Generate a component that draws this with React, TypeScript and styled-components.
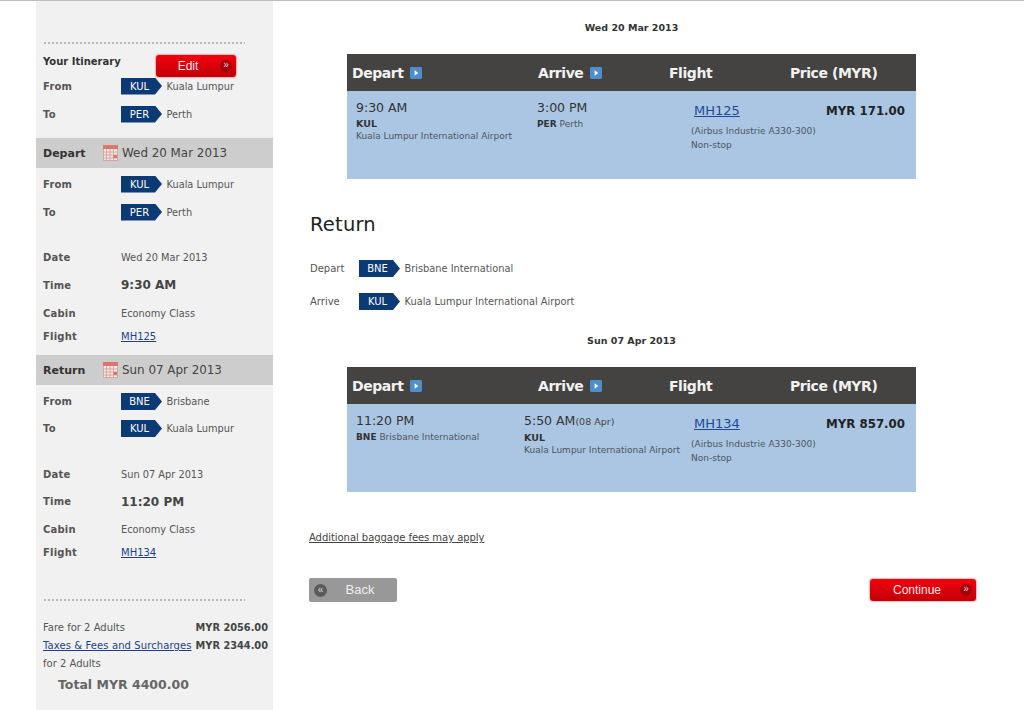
import React from "react";
import styled, { createGlobalStyle } from "styled-components";

const Global = createGlobalStyle`
  html, body { margin: 0; padding: 0; background: #fff; }
  body { font-family: "DejaVu Sans", Verdana, sans-serif; color: #333; overflow: hidden; }
  * { box-sizing: border-box; }
`;

const Page = styled.div`
  display: flex;
  width: 1024px;
  height: 710px;
  padding-left: 36px;
  border-top: 1px solid #bdbdbd;
  overflow: hidden;
`;

const Sidebar = styled.aside`
  width: 237px;
  flex: none;
  height: 709px;
  background: #f1f1f1;
  padding-top: 41px;
`;

const Dots = styled.div<{ $top?: number }>`
  margin: ${(p) => p.$top ?? 0}px 0 0 7px;
  width: 202px;
  height: 2px;
  background-image: radial-gradient(circle, #b4b4b4 0.7px, transparent 0.8px);
  background-size: 4px 2px;
`;

const TitleRow = styled.div`
  display: flex;
  height: 28px;
  padding: 5px 0 0 7px;
  align-items: flex-start;
`;

const SideTitle = styled.div`
  font-size: 10px;
  font-weight: bold;
  color: #333;
  width: 113px;
  line-height: 25px;
`;

const RedButton = styled.div<{ $w: number; $h: number }>`
  position: relative;
  flex: none;
  width: ${(p) => p.$w}px;
  height: ${(p) => p.$h}px;
  border-radius: 3px;
  background: linear-gradient(#f2000d, #c20008);
  box-shadow: 0 0 1px 1px rgba(220, 60, 60, 0.35);
  color: #f8e8e8;
  font-family: "Liberation Sans", Arial, sans-serif;
  font-size: 12px;
  line-height: ${(p) => p.$h}px;
  text-align: center;
  padding-right: 12px;
`;

const EditButton = styled(RedButton)`
  margin-top: 6px;
  padding-right: 16px;
`;

const Bullet = styled.span`
  position: absolute;
  right: 4px;
  top: 50%;
  width: 12px;
  height: 12px;
  margin-top: -6px;
  border-radius: 50%;
  background: #a30009;
  color: #f6d0d0;
  font-size: 10px;
  line-height: 10px;
  text-align: center;
  padding: 0;
`;

const Row = styled.div<{ $h?: number; $top?: number }>`
  display: flex;
  align-items: center;
  height: ${(p) => p.$h ?? 28}px;
  margin-top: ${(p) => p.$top ?? 0}px;
  padding-left: 7px;
  font-size: 10px;
  color: #555;
`;

const Label = styled.div`
  width: 78px;
  flex: none;
  font-weight: bold;
  font-size: 10px;
  color: #555;
  letter-spacing: 0.2px;
`;

const Value = styled.div<{ $big?: boolean }>`
  font-size: ${(p) => (p.$big ? 12 : 9.8)}px;
  font-weight: ${(p) => (p.$big ? "bold" : "normal")};
  color: ${(p) => (p.$big ? "#444" : "#555")};
`;

const Tag = styled.span`
  flex: none;
  width: 41px;
  height: 17px;
  background: #0b3a75;
  color: #fff;
  font-size: 10px;
  line-height: 17px;
  text-align: center;
  padding-right: 4px;
  clip-path: polygon(0 0, 34px 0, 100% 50%, 34px 100%, 0 100%);
  margin-right: 4.5px;
`;

const Place = styled.span`
  font-size: 9.8px;
  color: #555;
`;

const Band = styled.div<{ $top: number }>`
  display: flex;
  align-items: center;
  height: 30px;
  margin-top: ${(p) => p.$top}px;
  padding-left: 7px;
  background: #cdcdcd;
`;

const BandTitle = styled.div`
  width: 60px;
  flex: none;
  font-size: 11px;
  font-weight: bold;
  color: #333;
`;

const BandDate = styled.div`
  margin-left: 4px;
  font-size: 11.9px;
  color: #444;
`;

const SideLink = styled.a`
  color: #1e3f8a;
  text-decoration: underline;
  font-size: 10px;
`;

const FareLink = styled(SideLink)`
  letter-spacing: 0.1px;
`;

const FareRow = styled.div<{ $top?: number }>`
  display: flex;
  justify-content: space-between;
  height: 18px;
  margin-top: ${(p) => p.$top ?? 0}px;
  padding: 0 5px 0 7px;
  font-size: 10px;
  line-height: 18px;
  color: #555;
  white-space: nowrap;
`;

const FareAmount = styled.b`
  color: #444;
  font-size: 9.8px;
`;

const Total = styled.div`
  margin: 2px 0 0 22px;
  font-size: 12.5px;
  font-weight: bold;
  color: #666;
  line-height: 20px;
`;

const Main = styled.main`
  width: 667px;
  flex: none;
  margin-left: 36px;
`;

const DateTitle = styled.div<{ $top: number }>`
  width: 569px;
  margin: ${(p) => p.$top}px 0 0 38px;
  height: 14px;
  font-size: 9.5px;
  line-height: 14px;
  font-weight: bold;
  color: #333;
  text-align: center;
`;

const Table = styled.div`
  width: 569px;
  margin: 19px 0 0 38px;
`;

const THead = styled.div`
  display: grid;
  grid-template-columns: 186px 131px 121px 1fr;
  height: 37px;
  padding-left: 5px;
  background: #444342;
  align-items: center;
`;

const Th = styled.div`
  display: flex;
  align-items: center;
  gap: 7px;
  color: #f2f2f2;
  font-size: 14px;
  font-weight: bold;
  letter-spacing: -0.45px;
`;

const TBody = styled.div<{ $arrive: number }>`
  display: grid;
  grid-template-columns: ${(p) => p.$arrive}px ${(p) => 335 - p.$arrive}px 135px 1fr;
  height: 88px;
  padding: 9px 0 0 9px;
  background: #abc6e2;
  align-items: start;
`;

const Cell = styled.div`
  font-size: 9px;
  line-height: 12px;
  color: #4d5560;
  white-space: nowrap;
`;

const Time = styled.div`
  font-size: 12.5px;
  font-weight: normal;
  line-height: 15px;
  color: #333;
  margin: 0 0 3px;
`;

const Small = styled.span`
  font-size: 9.5px;
  color: #444;
`;

const Code = styled.div`
  font-weight: bold;
  font-size: 9.5px;
  color: #333;
`;

const CodeInline = styled.b`
  color: #333;
`;

const FlightLink = styled.a`
  display: block;
  margin: 3px 0 6px 3px;
  font-size: 13px;
  line-height: 15px;
  color: #1c4a98;
  text-decoration: underline;
`;

const Sub = styled.div`
  font-size: 9px;
  line-height: 14px;
  color: #4d5560;
`;

const Price = styled.div`
  font-size: 11.8px;
  font-weight: bold;
  line-height: 18px;
  margin-top: 2px;
  color: #222;
`;

const Heading = styled.h2`
  margin: 34px 0 0 1px;
  font-size: 19.5px;
  line-height: 24px;
  font-weight: normal;
  letter-spacing: 0.2px;
  color: #222;
`;

const InfoRow = styled.div<{ $top: number }>`
  display: flex;
  align-items: center;
  height: 17px;
  margin-top: ${(p) => p.$top}px;
  font-size: 10px;
  color: #555;
`;

const InfoLabel = styled.div`
  width: 50px;
  flex: none;
  padding-left: 1px;
`;

const Baggage = styled.a`
  display: block;
  margin-top: 39px;
  font-size: 10px;
  line-height: 14px;
  letter-spacing: -0.05px;
  color: #444;
  text-decoration: underline;
`;

const Actions = styled.div`
  display: flex;
  justify-content: space-between;
  align-items: center;
  margin-top: 33px;
`;

const BackButton = styled.div`
  position: relative;
  width: 88px;
  height: 24px;
  border-radius: 2px;
  background: #989898;
  color: #efefef;
  font-family: "Liberation Sans", Arial, sans-serif;
  font-size: 13px;
  line-height: 24px;
  text-align: center;
  padding-left: 14px;
`;

const BackBullet = styled.span`
  position: absolute;
  left: 5px;
  top: 6px;
  width: 13px;
  height: 13px;
  border-radius: 50%;
  background: #5a5a5a;
  color: #ddd;
  font-size: 10px;
  line-height: 11px;
  text-align: center;
`;

const Calendar = () => (
  <svg width="15" height="16" viewBox="0 0 15 16">
    <rect x="0.5" y="0.5" width="14" height="15" fill="#f5e6e2" stroke="#d9a9a0" />
    <rect x="0" y="0" width="15" height="4" fill="#d8776c" />
    <path d="M0 7h15M0 10h15M0 13h15M3.5 4v12M7 4v12M10.5 4v12" stroke="#cf9d95" strokeWidth="0.8" />
    <rect x="10.5" y="10" width="3.5" height="3" fill="#d8776c" />
  </svg>
);

const SortIcon = () => (
  <svg width="12" height="12" viewBox="0 0 13 13">
    <rect width="13" height="13" rx="1.5" fill="#4f8fc9" />
    <path d="M5 3.5 L9 6.5 L5 9.5Z" fill="#fff" />
  </svg>
);

const RouteRow = ({ label, code, place, top, h }: { label: string; code: string; place: string; top?: number; h?: number }) => (
  <Row $top={top} $h={h}>
    <Label>{label}</Label>
    <Tag>{code}</Tag>
    <Place>{place}</Place>
  </Row>
);

const Detail = ({ label, value, big, h, top }: { label: string; value: React.ReactNode; big?: boolean; h?: number; top?: number }) => (
  <Row $h={h} $top={top}>
    <Label>{label}</Label>
    <Value $big={big}>{value}</Value>
  </Row>
);

const Head = () => (
  <THead>
    <Th>Depart <SortIcon /></Th>
    <Th>Arrive <SortIcon /></Th>
    <Th>Flight</Th>
    <Th>Price (MYR)</Th>
  </THead>
);

const Footer = () => (
  <>
    <Dots $top={38} />
    <FareRow $top={18}>
      <span>Fare for 2 Adults</span>
      <FareAmount>MYR 2056.00</FareAmount>
    </FareRow>
    <FareRow>
      <FareLink>Taxes &amp; Fees and Surcharges</FareLink>
      <FareAmount>MYR 2344.00</FareAmount>
    </FareRow>
    <FareRow>for 2 Adults</FareRow>
    <Total>Total MYR 4400.00</Total>
  </>
);

export default function App() {
  return (
    <>
      <Global />
      <Page>
        <Sidebar>
          <Dots />
          <TitleRow>
            <SideTitle>Your Itinerary</SideTitle>
            <EditButton $w={80} $h={22}>
              Edit
              <Bullet>»</Bullet>
            </EditButton>
          </TitleRow>
          <RouteRow label="From" code="KUL" place="Kuala Lumpur" />
          <RouteRow label="To" code="PER" place="Perth" />
          <Band $top={10}>
            <BandTitle>Depart</BandTitle>
            <Calendar />
            <BandDate>Wed 20 Mar 2013</BandDate>
          </Band>
          <RouteRow label="From" code="KUL" place="Kuala Lumpur" top={2} />
          <RouteRow label="To" code="PER" place="Perth" />
          <Detail label="Date" value="Wed 20 Mar 2013" top={17} />
          <Detail label="Time" value="9:30 AM" big />
          <Detail label="Cabin" value="Economy Class" />
          <Detail label="Flight" value={<SideLink>MH125</SideLink>} h={18} />
          <Band $top={10}>
            <BandTitle>Return</BandTitle>
            <Calendar />
            <BandDate>Sun 07 Apr 2013</BandDate>
          </Band>
          <RouteRow label="From" code="BNE" place="Brisbane" top={3} h={27} />
          <RouteRow label="To" code="KUL" place="Kuala Lumpur" h={27} />
          <Detail label="Date" value="Sun 07 Apr 2013" top={18} />
          <Detail label="Time" value="11:20 PM" big h={27} />
          <Detail label="Cabin" value="Economy Class" />
          <Detail label="Flight" value={<SideLink>MH134</SideLink>} h={18} />
          <Footer />
        </Sidebar>
        <Main>
          <DateTitle $top={20}>Wed 20 Mar 2013</DateTitle>
          <Table>
            <Head />
            <TBody $arrive={181}>
              <Cell>
                <Time>9:30 AM</Time>
                <Code>KUL</Code>
                Kuala Lumpur International Airport
              </Cell>
              <Cell>
                <Time>3:00 PM</Time>
                <CodeInline>PER</CodeInline> Perth
              </Cell>
              <Cell>
                <FlightLink>MH125</FlightLink>
                <Sub>(Airbus Industrie A330-300)</Sub>
                <Sub>Non-stop</Sub>
              </Cell>
              <Price>MYR 171.00</Price>
            </TBody>
          </Table>
          <Heading>Return</Heading>
          <InfoRow $top={23}>
            <InfoLabel>Depart</InfoLabel>
            <Tag>BNE</Tag>
            <Place>Brisbane International</Place>
          </InfoRow>
          <InfoRow $top={16}>
            <InfoLabel>Arrive</InfoLabel>
            <Tag>KUL</Tag>
            <Place>Kuala Lumpur International Airport</Place>
          </InfoRow>
          <DateTitle $top={24}>Sun 07 Apr 2013</DateTitle>
          <Table>
            <Head />
            <TBody $arrive={168}>
              <Cell>
                <Time>11:20 PM</Time>
                <CodeInline>BNE</CodeInline> Brisbane International
              </Cell>
              <Cell>
                <Time>5:50 AM<Small>(08 Apr)</Small></Time>
                <Code>KUL</Code>
                Kuala Lumpur International Airport
              </Cell>
              <Cell>
                <FlightLink>MH134</FlightLink>
                <Sub>(Airbus Industrie A330-300)</Sub>
                <Sub>Non-stop</Sub>
              </Cell>
              <Price>MYR 857.00</Price>
            </TBody>
          </Table>
          <Baggage>Additional baggage fees may apply</Baggage>
          <Actions>
            <BackButton>
              <BackBullet>«</BackBullet>
              Back
            </BackButton>
            <RedButton $w={106} $h={22}>
              Continue
              <Bullet>»</Bullet>
            </RedButton>
          </Actions>
        </Main>
      </Page>
    </>
  );
}
